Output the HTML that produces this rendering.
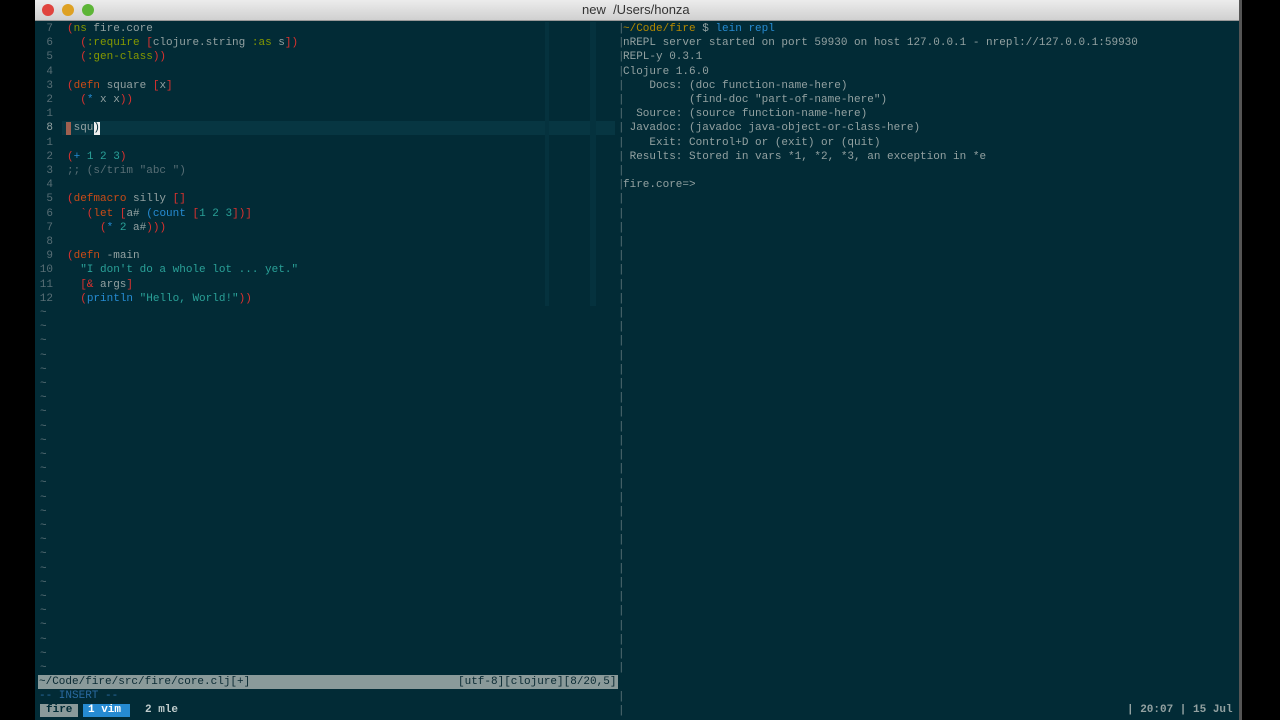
<!DOCTYPE html>
<html><head><meta charset="utf-8"><style>
*{margin:0;padding:0}
body{width:1280px;height:720px;background:#000;position:relative;overflow:hidden;font-family:"Liberation Mono",monospace;font-size:11px;}
#win{position:absolute;left:35px;top:0;width:1207px;height:720px;background:#022b36;}
#title{position:absolute;left:0;top:0;width:1207px;height:20px;background:linear-gradient(#ececec,#d0d0d0);border-bottom:1px solid #999;font-family:"Liberation Sans",sans-serif;font-size:13px;color:#333;text-align:center;line-height:20px;}
.dot{position:absolute;top:4px;width:12px;height:12px;border-radius:50%;}
pre{position:absolute;font-family:"Liberation Mono",monospace;font-size:11px;line-height:14.2px;color:#93a1a1;white-space:pre;}
.r{color:#dc322f}.g{color:#859900}.b{color:#268bd2}.c{color:#2aa198}.o{color:#cb4b16}.n{color:#586e75}.y{color:#b58900}
</style></head><body>
<div id="win">
<div id="title">
<div class="dot" style="left:7px;background:#e0443e"></div>
<div class="dot" style="left:27px;background:#dea123"></div>
<div class="dot" style="left:47px;background:#5db537"></div>
<span style="position:absolute;left:547px;top:0">new&nbsp; /Users/honza</span>
</div>
<div style="position:absolute;left:27px;top:121px;width:553px;height:14px;background:#073642"></div>
<div style="position:absolute;left:510px;top:22px;width:4px;height:284px;background:#05323e"></div>
<div style="position:absolute;left:555px;top:22px;width:6px;height:284px;background:#05323e"></div>
<div style="position:absolute;left:59px;top:122px;width:6px;height:13px;background:#eee"></div>
<div style="position:absolute;left:31px;top:122px;width:5px;height:13px;background:#a06050"></div>
<pre class="n" style="left:0;top:22px;text-align:right;width:18px">7
6
5
4
3
2
1
<span style="color:#93a1a1">8</span>
1
2
3
4
5
6
7
8
9
10
11
12</pre>
<pre class="n" style="left:5px;top:306px">~
~
~
~
~
~
~
~
~
~
~
~
~
~
~
~
~
~
~
~
~
~
~
~
~
~</pre>
<pre style="left:32px;top:22px"><span class="r">(</span><span class="g">ns</span> fire.core
  <span class="r">(</span><span class="g">:require</span> <span class="r">[</span>clojure.string <span class="g">:as</span> s<span class="r">])</span>
  <span class="r">(</span><span class="g">:gen-class</span><span class="r">))</span>

<span class="r">(</span><span class="o">defn</span> square <span class="r">[</span>x<span class="r">]</span>
  <span class="r">(</span><span class="b">*</span> x x<span class="r">))</span>

 squ<span style="color:#002b36">)</span>

<span class="r">(</span><span class="b">+</span> <span class="c">1 2 3</span><span class="r">)</span>
<span class="n">;; (s/trim "abc ")</span>

<span class="r">(</span><span class="o">defmacro</span> silly <span class="r">[]</span>
  <span class="r">`(</span><span class="o">let</span> <span class="r">[</span>a# <span class="b">(count</span> <span class="r">[</span><span class="c">1 2 3</span><span class="r">])]</span>
     <span class="r">(</span><span class="b">*</span> <span class="c">2</span> a#<span class="r">)))</span>

<span class="r">(</span><span class="o">defn</span> -main
  <span class="c">"I don't do a whole lot ... yet."</span>
  <span class="r">[&amp;</span> args<span class="r">]</span>
  <span class="r">(</span><span class="b">println</span> <span class="c">"Hello, World!"</span><span class="r">))</span></pre>
<pre style="left:583px;top:22px;color:#587075">|
|
|
|
|
|
|
|
|
|
|
|
|
|
|
|
|
|
|
|
|
|
|
|
|
|
|
|
|
|
|
|
|
|
|
|
|
|
|
|
|
|
|
|
|
|
 
|
|</pre>
<pre style="left:588px;top:22px"><span class="y">~/Code/fire</span> $ <span class="b">lein repl</span>
nREPL server started on port 59930 on host 127.0.0.1 - nrepl://127.0.0.1:59930
REPL-y 0.3.1
Clojure 1.6.0
    Docs: (doc function-name-here)
          (find-doc "part-of-name-here")
  Source: (source function-name-here)
 Javadoc: (javadoc java-object-or-class-here)
    Exit: Control+D or (exit) or (quit)
 Results: Stored in vars *1, *2, *3, an exception in *e

fire.core=&gt;</pre>
<div style="position:absolute;left:3px;top:675px;width:580px;height:14px;background:#8a9a9a"></div>
<pre style="left:4px;top:675px;color:#0a2a33">~/Code/fire/src/fire/core.clj[+]</pre>
<pre style="left:423px;top:675px;color:#0a2a33">[utf-8][clojure][8/20,5]</pre>
<pre style="left:4px;top:689px;color:#2a6aa0">-- INSERT --</pre>
<div style="position:absolute;left:5px;top:704px;width:38px;height:13px;background:#8a9a9a"></div>
<div style="position:absolute;left:48px;top:704px;width:47px;height:13px;background:#268bd2"></div>
<pre style="left:11px;top:703px;color:#002b36;font-weight:bold">fire</pre>
<pre style="left:53px;top:703px;color:#fff;font-weight:bold">1 vim</pre>
<pre style="left:110px;top:703px;color:#c0cccc;font-weight:bold">2 mle</pre>
<pre style="left:1092px;top:703px;font-weight:bold">| 20:07 | 15 Jul</pre>
<div style="position:absolute;right:0;top:0;width:3px;height:720px;background:#555"></div>
</div>
</body></html>
